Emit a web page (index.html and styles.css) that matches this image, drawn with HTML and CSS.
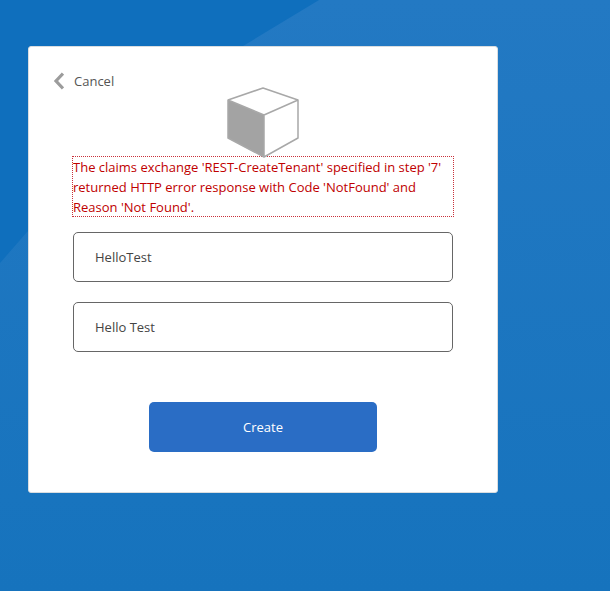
FILE: index.html
```html
<!DOCTYPE html>
<html lang="en">
<head>
<meta charset="utf-8">
<title>Create tenant</title>
<link rel="stylesheet" href="styles.css">
</head>
<body>
<svg class="backdrop" viewBox="0 0 610 591" aria-hidden="true">
  <polygon class="shade-dark" points="0,0 319,0 243,46 27,232 0,263"/>
</svg>
<main class="card">
  <a class="cancel" href="#">
    <svg class="chevron" viewBox="0 0 12 18" aria-hidden="true"><path d="M11 1.500 4 9l7 7.500"/></svg>
    <span>Cancel</span>
  </a>
  <svg class="cube" viewBox="0 0 72 72" aria-hidden="true">
    <path class="cube-face" d="M1 13 36 1l35 12v38L37 70 1 51z"/>
    <path class="cube-dark" d="M1 13l36 15v42L1 51z"/>
    <path class="cube-line" d="M1 13 36 1l35 12v38L37 70 1 51V13l36 15 34-15M37 28v42"/>
  </svg>
  <p class="error">The claims exchange 'REST-CreateTenant' specified in step '7' returned HTTP error response with Code 'NotFound' and Reason 'Not Found'.</p>
  <form class="fields">
    <input class="field" type="text" value="HelloTest">
    <input class="field" type="text" value="Hello Test">
    <button class="submit" type="button">Create</button>
  </form>
</main>
</body>
</html>
```
FILE: styles.css
```css
* { box-sizing: border-box; }
html, body { margin: 0; height: 591px; overflow: hidden; }
body {
  background: linear-gradient(180deg, #2379c3 0%, #1673bd 100%);
  font-family: "Open Sans", "Noto Sans", sans-serif;
  padding: 46px 0 0 28px;
}
.backdrop { position: absolute; inset: 0; width: 610px; height: 591px; }
.shade-dark { fill: #0f6fbd; }
.card {
  position: relative;
  width: 470px;
  height: 447px;
  background: #fff;
  border: 1px solid #d9dde0;
  border-radius: 3px;
  padding: 24px 43px 0;
}
.cancel {
  display: flex;
  align-items: center;
  gap: 10px;
  height: 20px;
  margin-left: -20px;
  color: #555;
  font-size: 13px;
  text-decoration: none;
}
.chevron { width: 12px; height: 18px; }
.chevron path { fill: none; stroke: #9c9c9c; stroke-width: 3.200; }
.cube { display: block; width: 72px; height: 72px; margin: -4px auto 0; }
.cube-face { fill: #fff; }
.cube-dark { fill: #a3a3a3; }
.cube-line { fill: none; stroke: #a8a8a8; stroke-width: 1.500; stroke-linejoin: round; }
.error {
  width: 382px;
  height: 61px;
  margin: -3px 0 0;
  border: 1px dotted #c8323c;
  color: #c00000;
  font-size: 13px;
  line-height: 20px;
}
.fields {
  display: flex;
  flex-direction: column;
  gap: 20px;
  margin: 15px 0 0 1px;
  width: 380px;
}
.field {
  height: 50px;
  border: 1px solid #666;
  border-radius: 5px;
  padding: 0 21px;
  font: 13px "Open Sans", "Noto Sans", sans-serif;
  color: #444;
  background: #fff;
}
.submit {
  align-self: center;
  width: 228px;
  height: 50px;
  margin-top: 30px;
  border: 0;
  border-radius: 5px;
  background: #2a6dc5;
  color: #fff;
  font: 13px "Open Sans", "Noto Sans", sans-serif;
}
```
